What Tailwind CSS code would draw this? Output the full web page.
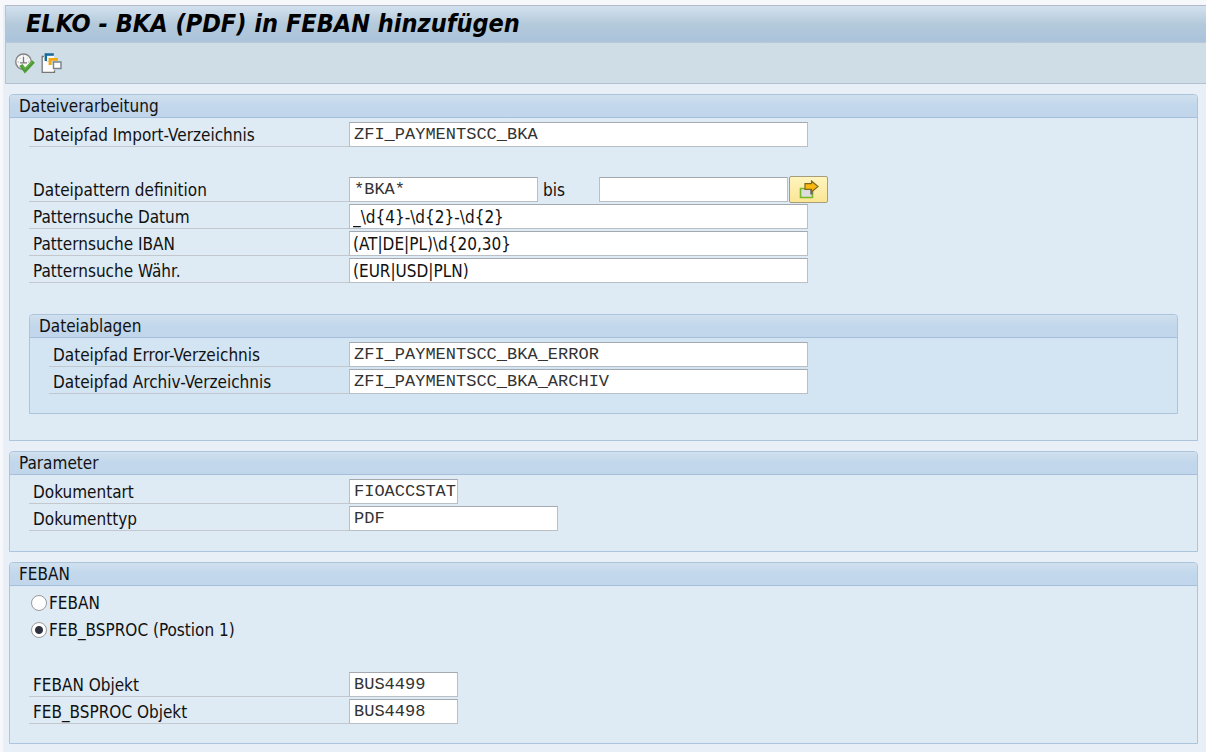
<!DOCTYPE html>
<html lang="de">

<head>
    <meta charset="UTF-8">
    <meta name="viewport" content="width=device-width, initial-scale=1.0">
    <title>ELKO - BKA (PDF) in FEBAN hinzufügen</title>
    <script src="https://cdn.jsdelivr.net/npm/@tailwindcss/browser@4"></script>
</head>

<body class="min-h-screen bg-[#e9eff6] border-t-5 border-l-3 border-[#f7f8fb] pl-[2px] font-['DejaVu_Sans_Condensed','Noto_Sans',sans-serif] text-[17px] leading-[26px] text-[#111]">

    <!-- Titel und Symbolleiste -->
    <header class="border-l border-[#b3c3d3]">
        <div class="h-[38px] flex items-center pl-5 border-t border-t-[#b3b9c9] border-b border-b-[#b9c8d6] bg-linear-to-b from-[#d3e1ee] via-[#b4cadb] to-[#abc3db]">
            <h1 class="text-[25px] font-bold italic text-black whitespace-nowrap">ELKO - BKA (PDF) in FEBAN hinzufügen</h1>
        </div>
        <div class="h-[41px] flex items-center gap-[6px] pl-2 bg-[#cfdde7] border-b border-b-[#b0c1d3]">
            <button type="button" aria-label="Ausführen" class="size-[21px]">
                <svg viewBox="0 0 21 21" class="size-[21px]" fill="none">
                    <circle cx="9.500" cy="8.800" r="7.800" fill="#f8f8f8" stroke="#858585" stroke-width="1.400" />
                    <path d="M9.500 4v6M6 9.800h7" stroke="#777" stroke-width="1.300" />
                    <path d="M9.500 2.500v1M3.500 9h1.500M14 9h1.500M5.500 5l.7.7M13.500 5l-.7.7M5.500 13l.7-.7" stroke="#aaa" />
                    <path d="M7 12l4 5.500 8.500-9" stroke="#4c9c35" stroke-width="3.800" />
                    <path d="M8 12.500l3 3.800 7-7.300" stroke="#6ab54a" stroke-width="1" />
                </svg>
            </button>
            <button type="button" aria-label="Variante holen" class="size-[21px]">
                <svg viewBox="0 0 21 21" class="size-[21px]" fill="none">
                    <path d="M1 3h4v6h5v3h3v7H1z" fill="#fdfdfd" />
                    <path d="M3 3.500H1.200v15.800h12.300v-2" stroke="#777" stroke-width="1.300" />
                    <path d="M4.800 8V1.500h8" stroke="#17699b" stroke-width="2.400" />
                    <path d="M6 3v5h2V5h5V3z" fill="#f6f8fa" />
                    <path d="M9 12V6.300h8" stroke="#f3a80c" stroke-width="2.800" />
                    <path d="M12.500 9h7.500v6.500h-7.500z" fill="#fff" stroke="#7b828a" stroke-width="1.400" />
                </svg>
            </button>
        </div>
    </header>

    <main class="flex flex-col gap-[10px] pt-[10px] pl-1 pr-2 pb-2">

        <!-- Dateiverarbeitung -->
        <section class="border border-[#adc4dd] rounded-t-sm bg-[#deeaf4]">
            <h2 class="h-[23px] pl-[9px] rounded-t-sm border-b border-[#a5bedb] bg-linear-to-b from-[#d0e0ee] via-[#c1d7eb] to-[#c1d6ea] leading-[22px]">Dateiverarbeitung</h2>
            <div class="pt-1 px-[19px] pb-[26px]">
                <div class="flex">
                    <label for="import" class="w-[320px] h-[25px] pl-1 border-b border-[#c2c8cd]">Dateipfad Import-Verzeichnis</label>
                    <input id="import" type="text" value="ZFI_PAYMENTSCC_BKA" class="w-[459px] h-[25px] px-1 bg-white border border-[#b9bfc4] border-t-[#a3a9ae] font-['Liberation_Mono',monospace] text-[#333]">
                </div>

                <div class="flex flex-col gap-[2px] mt-[30px]">
                    <div class="flex h-[25px]">
                        <label for="pattern-von" class="w-[320px] h-[25px] pl-1 border-b border-[#c2c8cd]">Dateipattern definition</label>
                        <input id="pattern-von" type="text" value="*BKA*" class="w-[189px] h-[25px] px-1 bg-white border border-[#b9bfc4] border-t-[#a3a9ae] font-['Liberation_Mono',monospace] text-[#333]">
                        <label for="pattern-bis" class="w-[61px] h-[25px] pl-[5px]">bis</label>
                        <input id="pattern-bis" type="text" class="w-[189px] h-[25px] px-1 bg-white border border-[#b9bfc4] border-t-[#a3a9ae] font-['Liberation_Mono',monospace] text-[#333]">
                        <button type="button" aria-label="Mehrfachselektion" class="w-[39px] h-[27px] ml-px -mt-px flex items-center justify-center rounded-xs border border-[#a59d7c] bg-linear-to-b from-[#fef4bd] to-[#fbe694]">
                            <svg viewBox="0 0 20 19" class="w-5 h-[19px]" fill="none">
                                <path d="M1.500 8.500h12v9h-12z" fill="#ddd" stroke="#77b82a" stroke-width="1.600" />
                                <path d="M12.500 10v4.500" stroke="#6b6b6b" stroke-width="2.500" />
                                <path d="M6 3.700h6.500V1l6.500 5.500-6.500 5.500V9.300H6z" fill="#fbb90f" stroke="#7b671f" stroke-width="1.200" />
                            </svg>
                        </button>
                    </div>
                    <div class="flex">
                        <label for="datum" class="w-[320px] h-[25px] pl-1 border-b border-[#c2c8cd]">Patternsuche Datum</label>
                        <input id="datum" type="text" value="_\d{4}-\d{2}-\d{2}" class="w-[459px] h-[25px] px-[3px] bg-white border border-[#b9bfc4] border-t-[#a3a9ae]">
                    </div>
                    <div class="flex">
                        <label for="iban" class="w-[320px] h-[25px] pl-1 border-b border-[#c2c8cd]">Patternsuche IBAN</label>
                        <input id="iban" type="text" value="(AT|DE|PL)\d{20,30}" class="w-[459px] h-[25px] px-[3px] bg-white border border-[#b9bfc4] border-t-[#a3a9ae]">
                    </div>
                    <div class="flex">
                        <label for="waehrung" class="w-[320px] h-[25px] pl-1 border-b border-[#c2c8cd]">Patternsuche Währ.</label>
                        <input id="waehrung" type="text" value="(EUR|USD|PLN)" class="w-[459px] h-[25px] px-[3px] bg-white border border-[#b9bfc4] border-t-[#a3a9ae]">
                    </div>
                </div>

                <!-- Dateiablagen -->
                <section class="mt-[31px] border border-[#adc4dd] rounded-t-sm bg-[#d3e4f2]">
                    <h3 class="h-[23px] pl-[9px] rounded-t-sm border-b border-[#a5bedb] bg-linear-to-b from-[#d0e0ee] via-[#c1d7eb] to-[#c1d6ea] leading-[22px]">Dateiablagen</h3>
                    <div class="flex flex-col gap-[2px] pt-1 px-[19px] pb-[19px]">
                        <div class="flex">
                            <label for="error" class="w-[300px] h-[25px] pl-1 border-b border-[#c2c8cd]">Dateipfad Error-Verzeichnis</label>
                            <input id="error" type="text" value="ZFI_PAYMENTSCC_BKA_ERROR" class="w-[459px] h-[25px] px-1 bg-white border border-[#b9bfc4] border-t-[#a3a9ae] font-['Liberation_Mono',monospace] text-[#333]">
                        </div>
                        <div class="flex">
                            <label for="archiv" class="w-[300px] h-[25px] pl-1 border-b border-[#c2c8cd]">Dateipfad Archiv-Verzeichnis</label>
                            <input id="archiv" type="text" value="ZFI_PAYMENTSCC_BKA_ARCHIV" class="w-[459px] h-[25px] px-1 bg-white border border-[#b9bfc4] border-t-[#a3a9ae] font-['Liberation_Mono',monospace] text-[#333]">
                        </div>
                    </div>
                </section>
            </div>
        </section>

        <!-- Parameter -->
        <section class="border border-[#adc4dd] rounded-t-sm bg-[#deeaf4]">
            <h2 class="h-[23px] pl-[9px] rounded-t-sm border-b border-[#a5bedb] bg-linear-to-b from-[#d0e0ee] via-[#c1d7eb] to-[#c1d6ea] leading-[22px]">Parameter</h2>
            <div class="flex flex-col gap-[2px] pt-1 px-[19px] pb-5">
                <div class="flex">
                    <label for="dokumentart" class="w-[320px] h-[25px] pl-1 border-b border-[#c2c8cd]">Dokumentart</label>
                    <input id="dokumentart" type="text" value="FIOACCSTAT" class="w-[109px] h-[25px] pl-1 bg-white border border-[#b9bfc4] border-t-[#a3a9ae] font-['Liberation_Mono',monospace] text-[#333]">
                </div>
                <div class="flex">
                    <label for="dokumenttyp" class="w-[320px] h-[25px] pl-1 border-b border-[#c2c8cd]">Dokumenttyp</label>
                    <input id="dokumenttyp" type="text" value="PDF" class="w-[209px] h-[25px] px-1 bg-white border border-[#b9bfc4] border-t-[#a3a9ae] font-['Liberation_Mono',monospace] text-[#333]">
                </div>
            </div>
        </section>

        <!-- FEBAN -->
        <section class="border border-[#adc4dd] rounded-t-sm bg-[#deeaf4]">
            <h2 class="h-[23px] pl-[9px] rounded-t-sm border-b border-[#a5bedb] bg-linear-to-b from-[#d0e0ee] via-[#c1d7eb] to-[#c1d6ea] leading-[22px]">FEBAN</h2>
            <div class="flex flex-col gap-[2px] pt-1 px-[19px] pb-[19px]">
                <div class="flex items-center h-[25px] pl-[2px] gap-[2px]">
                    <input id="feban" type="radio" name="ziel" class="appearance-none size-4 rounded-full border border-[#9a9a9a] bg-white checked:bg-radial checked:from-[#2f3140] checked:from-35% checked:to-white checked:to-45%">
                    <label for="feban">FEBAN</label>
                </div>
                <div class="flex items-center h-[25px] pl-[2px] gap-[2px]">
                    <input id="bsproc" type="radio" name="ziel" checked class="appearance-none size-4 rounded-full border border-[#9a9a9a] bg-white checked:bg-radial checked:from-[#2f3140] checked:from-35% checked:to-white checked:to-45%">
                    <label for="bsproc">FEB_BSPROC (Postion 1)</label>
                </div>
                <div class="flex mt-7">
                    <label for="feban-objekt" class="w-[320px] h-[25px] pl-1 border-b border-[#c2c8cd]">FEBAN Objekt</label>
                    <input id="feban-objekt" type="text" value="BUS4499" class="w-[109px] h-[25px] px-1 bg-white border border-[#b9bfc4] border-t-[#a3a9ae] font-['Liberation_Mono',monospace] text-[#333]">
                </div>
                <div class="flex">
                    <label for="bsproc-objekt" class="w-[320px] h-[25px] pl-1 border-b border-[#c2c8cd]">FEB_BSPROC Objekt</label>
                    <input id="bsproc-objekt" type="text" value="BUS4498" class="w-[109px] h-[25px] px-1 bg-white border border-[#b9bfc4] border-t-[#a3a9ae] font-['Liberation_Mono',monospace] text-[#333]">
                </div>
            </div>
        </section>
    </main>

</body>

</html>
